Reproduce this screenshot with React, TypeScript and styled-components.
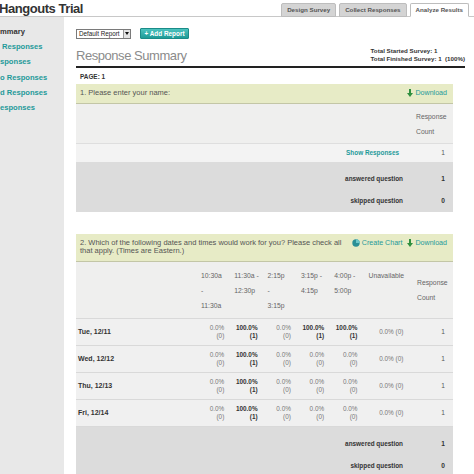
import React from 'react'
import styled, { createGlobalStyle } from 'styled-components'

const GlobalStyle = createGlobalStyle`
  html, body {
    margin: 0;
    padding: 0;
    background: #fff;
    overflow: hidden;
  }
  body {
    font-family: "Liberation Sans", Arial, sans-serif;
    color: #333;
  }
`

const TEAL = '#1f9a9a'

const Page = styled.div`
  width: 474px;
  height: 474px;
  overflow: hidden;
`

const TopBar = styled.header`
  height: 16px;
  border-bottom: 1px solid #c8c8c8;
  display: flex;
  align-items: flex-end;
  justify-content: space-between;
  padding-right: 5px;
`

const Title = styled.h1`
  margin: 0 0 1px -1px;
  align-self: flex-start;
  font-size: 13px;
  line-height: 17px;
  letter-spacing: -0.45px;
  font-weight: bold;
  color: #333;
  white-space: nowrap;
`

const Tabs = styled.nav`
  display: flex;
  gap: 3px;
  margin-bottom: -1px;
`

const Tab = styled.div<{ $active?: boolean }>`
  height: 12px;
  line-height: 12px;
  padding: 0 5px;
  font-size: 6.2px;
  font-weight: bold;
  color: #555;
  white-space: nowrap;
  background: ${(p) => (p.$active ? '#fff' : '#d4d4d4')};
  border: 1px solid #bdbdbd;
  border-bottom-color: ${(p) => (p.$active ? '#fff' : '#bdbdbd')};
  border-radius: 2px 2px 0 0;
`

const Body = styled.div`
  display: flex;
`

const Sidebar = styled.aside`
  width: 64px;
  flex: none;
  min-height: 457px;
  padding-top: 7px;
  box-sizing: border-box;
  background: #e8e8e8;
  overflow: hidden;
`

const NavItem = styled.div<{ $current?: boolean; $indent?: number }>`
  font-size: 7.6px;
  line-height: 15.2px;
  font-weight: bold;
  white-space: nowrap;
  padding-left: ${(p) => p.$indent || 0}px;
  color: ${(p) => (p.$current ? '#333' : TEAL)};
`

const Main = styled.main`
  padding-left: 12px;
  width: 389px;
`

const Toolbar = styled.div`
  display: flex;
  align-items: center;
  gap: 9px;
  margin-top: 11px;
`

const Select = styled.div`
  width: 55px;
  height: 10px;
  box-sizing: border-box;
  border: 1px solid #7a7a7a;
  background: #fff;
  display: flex;
  align-items: center;
  justify-content: space-between;
  padding-left: 2px;
  font-size: 6.3px;
  color: #222;
  white-space: nowrap;
`

const SelectArrow = styled.span`
  width: 7px;
  height: 8px;
  box-sizing: border-box;
  border-left: 1px solid #999;
  background: #e4e4e4;
  display: flex;
  align-items: center;
  justify-content: center;
  &::after {
    content: '';
    border-left: 2px solid transparent;
    border-right: 2px solid transparent;
    border-top: 3px solid #111;
  }
`

const AddButton = styled.div`
  width: 49px;
  height: 11px;
  box-sizing: border-box;
  border: 1px solid #1a8c88;
  border-radius: 1px;
  background: linear-gradient(#4cc3bf, #1f9b97);
  color: #fff;
  font-size: 6.4px;
  font-weight: bold;
  line-height: 9px;
  text-align: center;
  white-space: nowrap;
`

const SummaryHead = styled.div`
  margin-top: 8px;
  display: flex;
  justify-content: space-between;
  align-items: flex-end;
  padding-bottom: 2px;
  border-bottom: 2px solid #222;
`

const SummaryTitle = styled.h2`
  margin: 0;
  font-size: 13px;
  line-height: 16px;
  letter-spacing: -0.45px;
  font-weight: normal;
  color: #8b8b8b;
`

const Totals = styled.div`
  font-size: 6.2px;
  line-height: 8px;
  font-weight: bold;
  color: #333;
  white-space: nowrap;
  margin-bottom: 1px;
`

const PageLabel = styled.div`
  margin: 4px 0 2px;
  padding-left: 4px;
  font-size: 6.4px;
  line-height: 10px;
  font-weight: bold;
  color: #333;
`

const Questions = styled.div`
  width: 377px;
  display: flex;
  flex-direction: column;
  gap: 22px;
`

const QHead = styled.div`
  background: #e7ebc6;
  border-bottom: 1px solid #c3c6a6;
  padding: 5px 6px 5px 4px;
  display: flex;
  justify-content: space-between;
  align-items: flex-start;
  font-size: 7.5px;
  line-height: 8.5px;
  color: #555;
`

const QText = styled.div`
  width: 266px;
`

const Actions = styled.div`
  display: flex;
  gap: 5px;
  white-space: nowrap;
  color: ${TEAL};
  font-size: 7.1px;
`

const Action = styled.span`
  display: flex;
  align-items: center;
  gap: 2px;
`

const HeadArea = styled.div`
  display: flex;
  background: #efefee;
  border-bottom: 1px solid #dedede;
  padding: 5px 0 4px;
`

const Spacer = styled.div`
  flex: 1;
`

const CountHead = styled.div`
  width: 43px;
  box-sizing: border-box;
  padding-left: 6px;
  font-size: 6.8px;
  line-height: 15px;
  color: #666;
`

const LineRow = styled.div<{ $tone?: 'light' | 'dark' }>`
  display: flex;
  align-items: center;
  height: ${(p) => (p.$tone === 'dark' ? 22 : 18)}px;
  background: ${(p) => (p.$tone === 'dark' ? 'transparent' : '#f3f3f3')};
`

const RowLabel = styled.div<{ $link?: boolean }>`
  flex: 1;
  text-align: right;
  padding-right: ${(p) => (p.$link ? 11 : 7)}px;
  font-size: 6.4px;
  font-weight: bold;
  color: ${(p) => (p.$link ? TEAL : '#333')};
`

const RowCount = styled.div<{ $strong?: boolean }>`
  width: 43px;
  box-sizing: border-box;
  text-align: right;
  padding-right: 8px;
  font-size: 6.6px;
  font-weight: ${(p) => (p.$strong ? 'bold' : 'normal')};
  color: ${(p) => (p.$strong ? '#333' : '#555')};
`

const SummaryArea = styled.div`
  background: #dcdcdc;
  padding-top: 6px;
`

const COLS = '120px repeat(5, 33.3px) 47.5px 1fr'

const GridHead = styled.div`
  display: grid;
  grid-template-columns: ${COLS};
  background: #efefee;
  border-bottom: 1px solid #d9d9d9;
  padding: 6px 0 5px;
`

const HeadCell = styled.div<{ $pad?: number; $center?: boolean }>`
  padding-left: ${(p) => p.$pad ?? 5}px;
  font-size: 6.8px;
  line-height: 15px;
  color: #666;
  white-space: nowrap;
  align-self: ${(p) => (p.$center ? 'center' : 'start')};
`

const GridRow = styled.div`
  display: grid;
  grid-template-columns: ${COLS};
  align-items: center;
  height: 26px;
  background: #f0f0f0;
  border-bottom: 1px solid #d9d9d9;
`

const DayLabel = styled.div`
  padding-left: 2px;
  font-size: 7px;
  font-weight: bold;
  color: #333;
`

const Val = styled.div<{ $strong?: boolean }>`
  text-align: right;
  padding-right: 5px;
  font-size: 6.4px;
  line-height: 8px;
  font-weight: ${(p) => (p.$strong ? 'bold' : 'normal')};
  color: ${(p) => (p.$strong ? '#333' : '#777')};
`

const UnavailVal = styled.div`
  text-align: center;
  padding-left: 10px;
  font-size: 6.4px;
  color: #777;
  white-space: nowrap;
`

const CountVal = styled.div`
  text-align: right;
  padding-right: 8px;
  font-size: 6.6px;
  color: #555;
`

const DownloadIcon = () => (
  <svg width="6" height="8" viewBox="0 0 6 8">
    <path d="M2 0h2v4h2L3 8 0 4h2z" fill="#2f8f3f" />
  </svg>
)

const ChartIcon = () => (
  <svg width="8" height="8" viewBox="0 0 8 8">
    <circle cx="4" cy="4" r="3.7" fill="#2a8f96" />
    <path d="M4 4V0.3A3.7 3.7 0 0 1 7.7 4z" fill="#6cc6c9" />
  </svg>
)

const nav = [
  { text: 'mmary', current: true, indent: 0 },
  { text: 'Responses', indent: 2 },
  { text: 'sponses', indent: 0 },
  { text: 'o Responses', indent: 0 },
  { text: 'd Responses', indent: 0 },
  { text: 'esponses', indent: 0 },
]

const times = [
  ['10:30a', '-', '11:30a'],
  ['11:30a -', '12:30p'],
  ['2:15p', '-', '3:15p'],
  ['3:15p -', '4:15p'],
  ['4:00p -', '5:00p'],
]

const days = [
  { day: 'Tue, 12/11', hits: [0, 1, 0, 1, 1] },
  { day: 'Wed, 12/12', hits: [0, 1, 0, 0, 0] },
  { day: 'Thu, 12/13', hits: [0, 1, 0, 0, 0] },
  { day: 'Fri, 12/14', hits: [0, 1, 0, 0, 0] },
]

const Summary = ({ answered, skipped }: { answered: number; skipped: number }) => (
  <SummaryArea>
    <LineRow $tone="dark">
      <RowLabel>answered question</RowLabel>
      <RowCount $strong>{answered}</RowCount>
    </LineRow>
    <LineRow $tone="dark">
      <RowLabel>skipped question</RowLabel>
      <RowCount $strong>{skipped}</RowCount>
    </LineRow>
  </SummaryArea>
)

export default function App() {
  return (
    <Page>
      <GlobalStyle />
      <TopBar>
        <Title>Hangouts Trial</Title>
        <Tabs>
          <Tab>Design Survey</Tab>
          <Tab>Collect Responses</Tab>
          <Tab $active>Analyze Results</Tab>
        </Tabs>
      </TopBar>
      <Body>
        <Sidebar>
          {nav.map((n) => (
            <NavItem key={n.text} $current={n.current} $indent={n.indent}>
              {n.text}
            </NavItem>
          ))}
        </Sidebar>
        <Main>
          <Toolbar>
            <Select>
              Default Report
              <SelectArrow />
            </Select>
            <AddButton>+ Add Report</AddButton>
          </Toolbar>
          <SummaryHead>
            <SummaryTitle>Response Summary</SummaryTitle>
            <Totals>
              Total Started Survey: 1
              <br />
              Total Finished Survey: 1 &nbsp;(100%)
            </Totals>
          </SummaryHead>
          <PageLabel>PAGE: 1</PageLabel>
          <Questions>
            <section>
              <QHead>
                <QText>1. Please enter your name:</QText>
                <Actions>
                  <Action>
                    <DownloadIcon />
                    Download
                  </Action>
                </Actions>
              </QHead>
              <HeadArea>
                <Spacer />
                <CountHead>
                  Response
                  <br />
                  Count
                </CountHead>
              </HeadArea>
              <LineRow>
                <RowLabel $link>Show Responses</RowLabel>
                <RowCount>1</RowCount>
              </LineRow>
              <Summary answered={1} skipped={0} />
            </section>
            <section>
              <QHead>
                <QText>
                  2. Which of the following dates and times would work for you? Please check all that apply. (Times are
                  Eastern.)
                </QText>
                <Actions>
                  <Action>
                    <ChartIcon />
                    Create Chart
                  </Action>
                  <Action>
                    <DownloadIcon />
                    Download
                  </Action>
                </Actions>
              </QHead>
              <GridHead>
                <div />
                {times.map((t, i) => (
                  <HeadCell key={i}>
                    {t.map((line, j) => (
                      <div key={j}>{line}</div>
                    ))}
                  </HeadCell>
                ))}
                <HeadCell $pad={6}>Unavailable</HeadCell>
                <HeadCell $pad={7} $center>
                  Response
                  <br />
                  Count
                </HeadCell>
              </GridHead>
              {days.map((d) => (
                <GridRow key={d.day}>
                  <DayLabel>{d.day}</DayLabel>
                  {d.hits.map((h, i) => (
                    <Val key={i} $strong={h > 0}>
                      {h > 0 ? '100.0%' : '0.0%'}
                      <br />({h})
                    </Val>
                  ))}
                  <UnavailVal>0.0% (0)</UnavailVal>
                  <CountVal>1</CountVal>
                </GridRow>
              ))}
              <Summary answered={1} skipped={0} />
            </section>
          </Questions>
        </Main>
      </Body>
    </Page>
  )
}
